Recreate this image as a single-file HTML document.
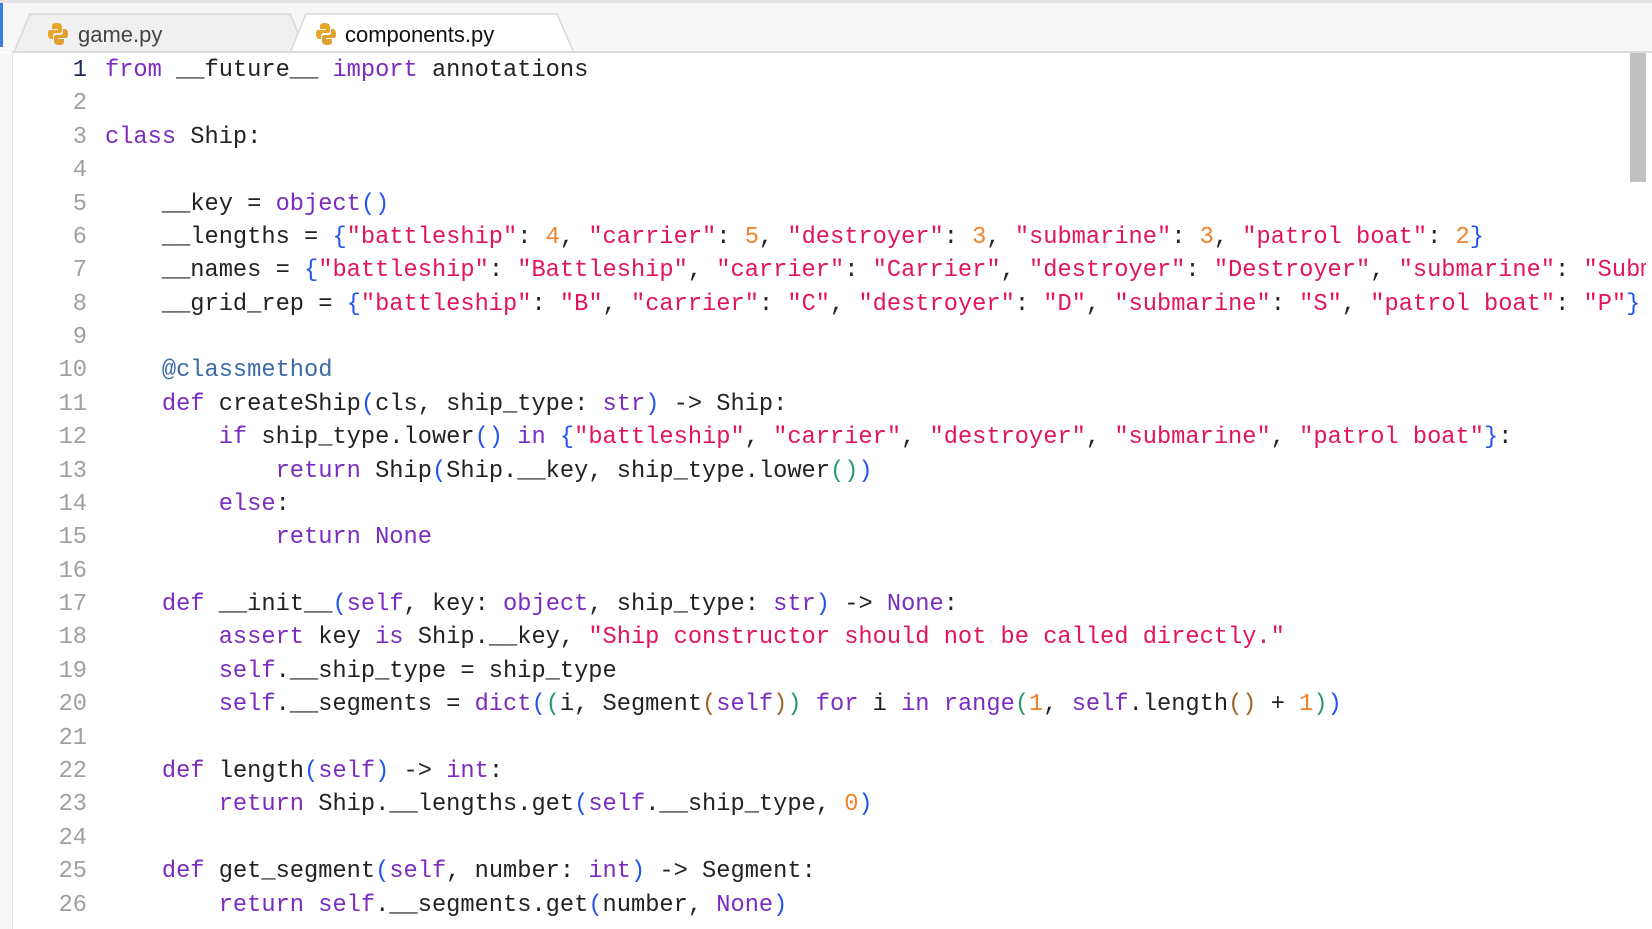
<!DOCTYPE html>
<html><head><meta charset="utf-8"><style>
html,body{margin:0;padding:0;width:1652px;height:929px;overflow:hidden;background:#fff;}
#top{position:absolute;left:0;top:0;width:1652px;height:52px;background:#f6f6f6;border-top:3px solid #e2e2e2;box-sizing:border-box;}
#tabline{position:absolute;left:12px;top:51px;width:1640px;height:2px;background:#dcdcdc;}
#blue{position:absolute;left:0;top:3px;width:3px;height:44px;background:#3b7de0;}
#leftbar{position:absolute;left:0;top:53px;width:12px;height:876px;background:#f6f6f6;border-right:1px solid #e4e4e4;}
.tab{position:absolute;top:12px;font:22px "Liberation Sans",sans-serif;color:#333;}
#code{position:absolute;left:0;top:57px;width:1646px;height:872px;overflow:hidden;}
.l{position:absolute;left:0;height:33.38px;line-height:33.38px;white-space:pre;font:23.7px "Liberation Mono",monospace;color:#222;width:1646px;}
.ln{position:absolute;width:87px;text-align:right;color:#a0a0a0;left:0;}
.c{position:absolute;left:105px;}
.k{color:#7b2cc0}.s{color:#e3145c}.n{color:#f0822a}.b{color:#2255ee}.g{color:#2a9a6a}.r{color:#a0622a}.d{color:#3d6aa8}
#sb{position:absolute;left:1630px;top:53px;width:16px;height:129px;background:#c0c0c0;}
</style></head><body>
<div id="top"></div>
<div id="blue"></div>
<svg style="position:absolute;left:0;top:0" width="1652" height="54">
<path d="M14 52 L30 14 L290 14 L306 52" fill="#f0f0f0" stroke="#d8d8d8" stroke-width="1.5"/>
<path d="M290 53 L306 14 L557 14 L574 53" fill="#fff" stroke="#d8d8d8" stroke-width="1.5"/>
<g transform="translate(48,23)"><path d="M9 0 C4 0 4 2 4 4 L4 6 L10 6 L10 7 L2 7 C0 7 0 10 0 11 C0 15 2 16 3 16 L5 16 L5 13 C5 11 6 10 8 10 L12 10 C13 10 14 9 14 8 L14 4 C14 2 13 0 9 0Z" fill="#e8a52a"/><path d="M11 22 C16 22 16 20 16 18 L16 16 L10 16 L10 15 L18 15 C20 15 20 12 20 11 C20 7 18 6 17 6 L15 6 L15 9 C15 11 14 12 12 12 L8 12 C7 12 6 13 6 14 L6 18 C6 20 7 22 11 22Z" fill="#e0a030"/></g>
<g transform="translate(316,23)"><path d="M9 0 C4 0 4 2 4 4 L4 6 L10 6 L10 7 L2 7 C0 7 0 10 0 11 C0 15 2 16 3 16 L5 16 L5 13 C5 11 6 10 8 10 L12 10 C13 10 14 9 14 8 L14 4 C14 2 13 0 9 0Z" fill="#e8a52a"/><path d="M11 22 C16 22 16 20 16 18 L16 16 L10 16 L10 15 L18 15 C20 15 20 12 20 11 C20 7 18 6 17 6 L15 6 L15 9 C15 11 14 12 12 12 L8 12 C7 12 6 13 6 14 L6 18 C6 20 7 22 11 22Z" fill="#e0a030"/></g>
</svg>
<div class="tab" style="left:78px;top:22px;color:#444">game.py</div>
<div class="tab" style="left:345px;top:22px;color:#111">components.py</div>
<div id="tabline"></div>
<div id="leftbar"></div>
<div id="code">
<div class="l" style="top:0px"><span class="ln" style="color:#1a2a5a">1</span><span class="c"><span class="k">from</span> __future__ <span class="k">import</span> annotations</span></div>
<div class="l" style="top:33.38px"><span class="ln">2</span></div>
<div class="l" style="top:66.76px"><span class="ln">3</span><span class="c"><span class="k">class</span> Ship:</span></div>
<div class="l" style="top:100.14px"><span class="ln">4</span></div>
<div class="l" style="top:133.52px"><span class="ln">5</span><span class="c">    __key = <span class="k">object</span><span class="b">()</span></span></div>
<div class="l" style="top:166.9px"><span class="ln">6</span><span class="c">    __lengths = <span class="b">{</span><span class="s">"battleship"</span>: <span class="n">4</span>, <span class="s">"carrier"</span>: <span class="n">5</span>, <span class="s">"destroyer"</span>: <span class="n">3</span>, <span class="s">"submarine"</span>: <span class="n">3</span>, <span class="s">"patrol boat"</span>: <span class="n">2</span><span class="b">}</span></span></div>
<div class="l" style="top:200.28px"><span class="ln">7</span><span class="c">    __names = <span class="b">{</span><span class="s">"battleship"</span>: <span class="s">"Battleship"</span>, <span class="s">"carrier"</span>: <span class="s">"Carrier"</span>, <span class="s">"destroyer"</span>: <span class="s">"Destroyer"</span>, <span class="s">"submarine"</span>: <span class="s">"Submarine"</span>, <span class="s">"patrol boat"</span>: <span class="s">"Patrol Boat"</span><span class="b">}</span></span></div>
<div class="l" style="top:233.66px"><span class="ln">8</span><span class="c">    __grid_rep = <span class="b">{</span><span class="s">"battleship"</span>: <span class="s">"B"</span>, <span class="s">"carrier"</span>: <span class="s">"C"</span>, <span class="s">"destroyer"</span>: <span class="s">"D"</span>, <span class="s">"submarine"</span>: <span class="s">"S"</span>, <span class="s">"patrol boat"</span>: <span class="s">"P"</span><span class="b">}</span></span></div>
<div class="l" style="top:267.04px"><span class="ln">9</span></div>
<div class="l" style="top:300.42px"><span class="ln">10</span><span class="c">    <span class="d">@classmethod</span></span></div>
<div class="l" style="top:333.8px"><span class="ln">11</span><span class="c">    <span class="k">def</span> createShip<span class="b">(</span>cls, ship_type: <span class="k">str</span><span class="b">)</span> -&gt; Ship:</span></div>
<div class="l" style="top:367.18px"><span class="ln">12</span><span class="c">        <span class="k">if</span> ship_type.lower<span class="b">()</span> <span class="k">in</span> <span class="b">{</span><span class="s">"battleship"</span>, <span class="s">"carrier"</span>, <span class="s">"destroyer"</span>, <span class="s">"submarine"</span>, <span class="s">"patrol boat"</span><span class="b">}</span>:</span></div>
<div class="l" style="top:400.56px"><span class="ln">13</span><span class="c">            <span class="k">return</span> Ship<span class="b">(</span>Ship.__key, ship_type.lower<span class="g">()</span><span class="b">)</span></span></div>
<div class="l" style="top:433.94px"><span class="ln">14</span><span class="c">        <span class="k">else</span>:</span></div>
<div class="l" style="top:467.32px"><span class="ln">15</span><span class="c">            <span class="k">return</span> <span class="k">None</span></span></div>
<div class="l" style="top:500.7px"><span class="ln">16</span></div>
<div class="l" style="top:534.08px"><span class="ln">17</span><span class="c">    <span class="k">def</span> __init__<span class="b">(</span><span class="k">self</span>, key: <span class="k">object</span>, ship_type: <span class="k">str</span><span class="b">)</span> -&gt; <span class="k">None</span>:</span></div>
<div class="l" style="top:567.46px"><span class="ln">18</span><span class="c">        <span class="k">assert</span> key <span class="k">is</span> Ship.__key, <span class="s">"Ship constructor should not be called directly."</span></span></div>
<div class="l" style="top:600.84px"><span class="ln">19</span><span class="c">        <span class="k">self</span>.__ship_type = ship_type</span></div>
<div class="l" style="top:634.22px"><span class="ln">20</span><span class="c">        <span class="k">self</span>.__segments = <span class="k">dict</span><span class="b">(</span><span class="g">(</span>i, Segment<span class="r">(</span><span class="k">self</span><span class="r">)</span><span class="g">)</span> <span class="k">for</span> i <span class="k">in</span> <span class="k">range</span><span class="g">(</span><span class="n">1</span>, <span class="k">self</span>.length<span class="r">()</span> + <span class="n">1</span><span class="g">)</span><span class="b">)</span></span></div>
<div class="l" style="top:667.6px"><span class="ln">21</span></div>
<div class="l" style="top:700.98px"><span class="ln">22</span><span class="c">    <span class="k">def</span> length<span class="b">(</span><span class="k">self</span><span class="b">)</span> -&gt; <span class="k">int</span>:</span></div>
<div class="l" style="top:734.36px"><span class="ln">23</span><span class="c">        <span class="k">return</span> Ship.__lengths.get<span class="b">(</span><span class="k">self</span>.__ship_type, <span class="n">0</span><span class="b">)</span></span></div>
<div class="l" style="top:767.74px"><span class="ln">24</span></div>
<div class="l" style="top:801.12px"><span class="ln">25</span><span class="c">    <span class="k">def</span> get_segment<span class="b">(</span><span class="k">self</span>, number: <span class="k">int</span><span class="b">)</span> -&gt; Segment:</span></div>
<div class="l" style="top:834.5px"><span class="ln">26</span><span class="c">        <span class="k">return</span> <span class="k">self</span>.__segments.get<span class="b">(</span>number, <span class="k">None</span><span class="b">)</span></span></div>
</div>
<div id="sb"></div>
</body></html>
